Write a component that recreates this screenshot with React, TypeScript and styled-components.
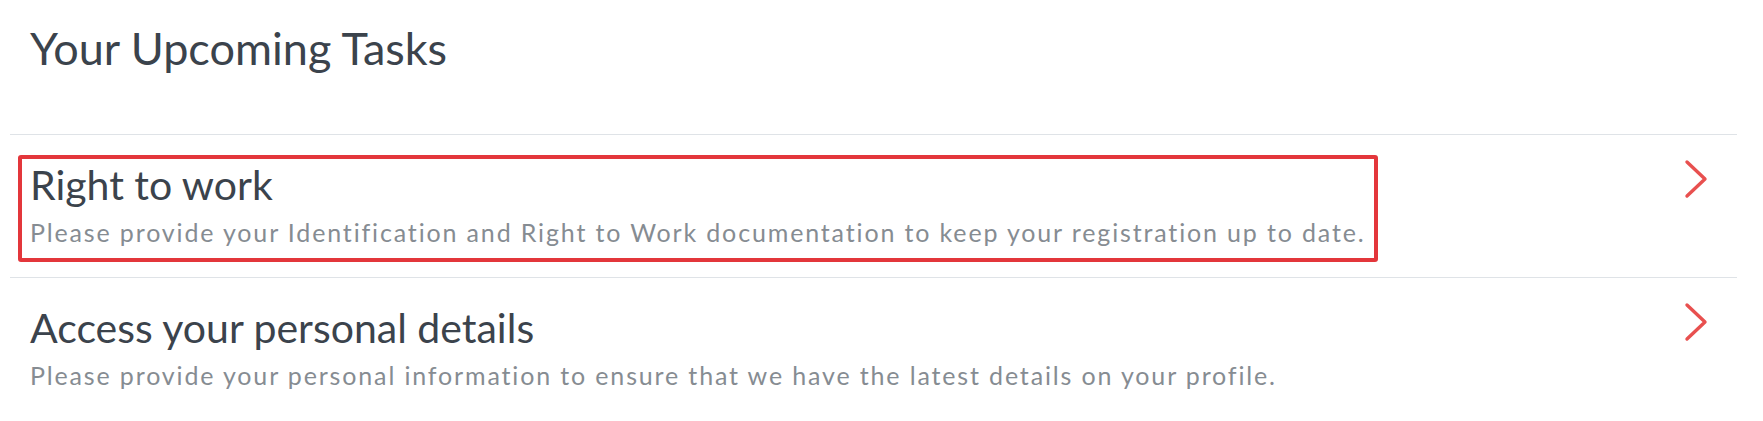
import React from "react";
import styled, { createGlobalStyle } from "styled-components";

const GlobalStyle = createGlobalStyle`
  html, body {
    margin: 0;
    padding: 0;
    background: #ffffff;
  }
  body {
    font-family: Lato, "Noto Sans", "Liberation Sans", sans-serif;
    -webkit-font-smoothing: antialiased;
  }
`;

const Page = styled.main`
  padding: 0 26px 0 10px;
`;

const Heading = styled.h1`
  margin: 0;
  padding: 21px 0 59px 20px;
  font-size: 45px;
  line-height: 1.2;
  font-weight: 400;
  color: #3b434c;
`;

const TaskList = styled.ul`
  list-style: none;
  margin: 0;
  padding: 0;
`;

const TaskRow = styled.li`
  display: flex;
  justify-content: space-between;
  align-items: flex-start;
  border-top: 1px solid #dfe3e7;
  padding: 20px 29px 15px 8px;
  cursor: pointer;
`;

const TaskText = styled.div<{ $highlighted?: boolean }>`
  display: flex;
  flex-direction: column;
  gap: 8px;
  width: fit-content;
  padding: 1px 8px 11px 8px;
  border: 4px solid ${(p) => (p.$highlighted ? "#e3363b" : "transparent")};
  border-radius: 3px;
`;

const TaskTitle = styled.h2`
  margin: 0;
  font-size: 41px;
  line-height: 1.2;
  font-weight: 400;
  color: #3b434c;
`;

const TaskDescription = styled.p`
  margin: 0;
  font-size: 25px;
  line-height: 1.2;
  font-weight: 400;
  letter-spacing: 1.85px;
  color: #868c92;
  white-space: nowrap;
`;

const Chevron = styled.svg`
  flex: none;
  width: 24px;
  height: 40px;
  margin-top: 4px;
`;

const ChevronIcon = () => (
  <Chevron viewBox="0 0 24 40" aria-hidden="true">
    <polyline
      points="3,3 21,20 3,37"
      fill="none"
      stroke="#e8504f"
      strokeWidth="3.4"
      strokeLinecap="round"
      strokeLinejoin="round"
    />
  </Chevron>
);

type Task = { title: string; description: string; highlighted?: boolean };

const tasks: Task[] = [
  {
    title: "Right to work",
    description:
      "Please provide your Identification and Right to Work documentation to keep your registration up to date.",
    highlighted: true,
  },
  {
    title: "Access your personal details",
    description:
      "Please provide your personal information to ensure that we have the latest details on your profile.",
  },
];

export default function App() {
  return (
    <>
      <GlobalStyle />
      <Page>
        <Heading>Your Upcoming Tasks</Heading>
        <TaskList>
          {tasks.map((t) => (
            <TaskRow key={t.title}>
              <TaskText $highlighted={t.highlighted}>
                <TaskTitle>{t.title}</TaskTitle>
                <TaskDescription>{t.description}</TaskDescription>
              </TaskText>
              <ChevronIcon />
            </TaskRow>
          ))}
        </TaskList>
      </Page>
    </>
  );
}
